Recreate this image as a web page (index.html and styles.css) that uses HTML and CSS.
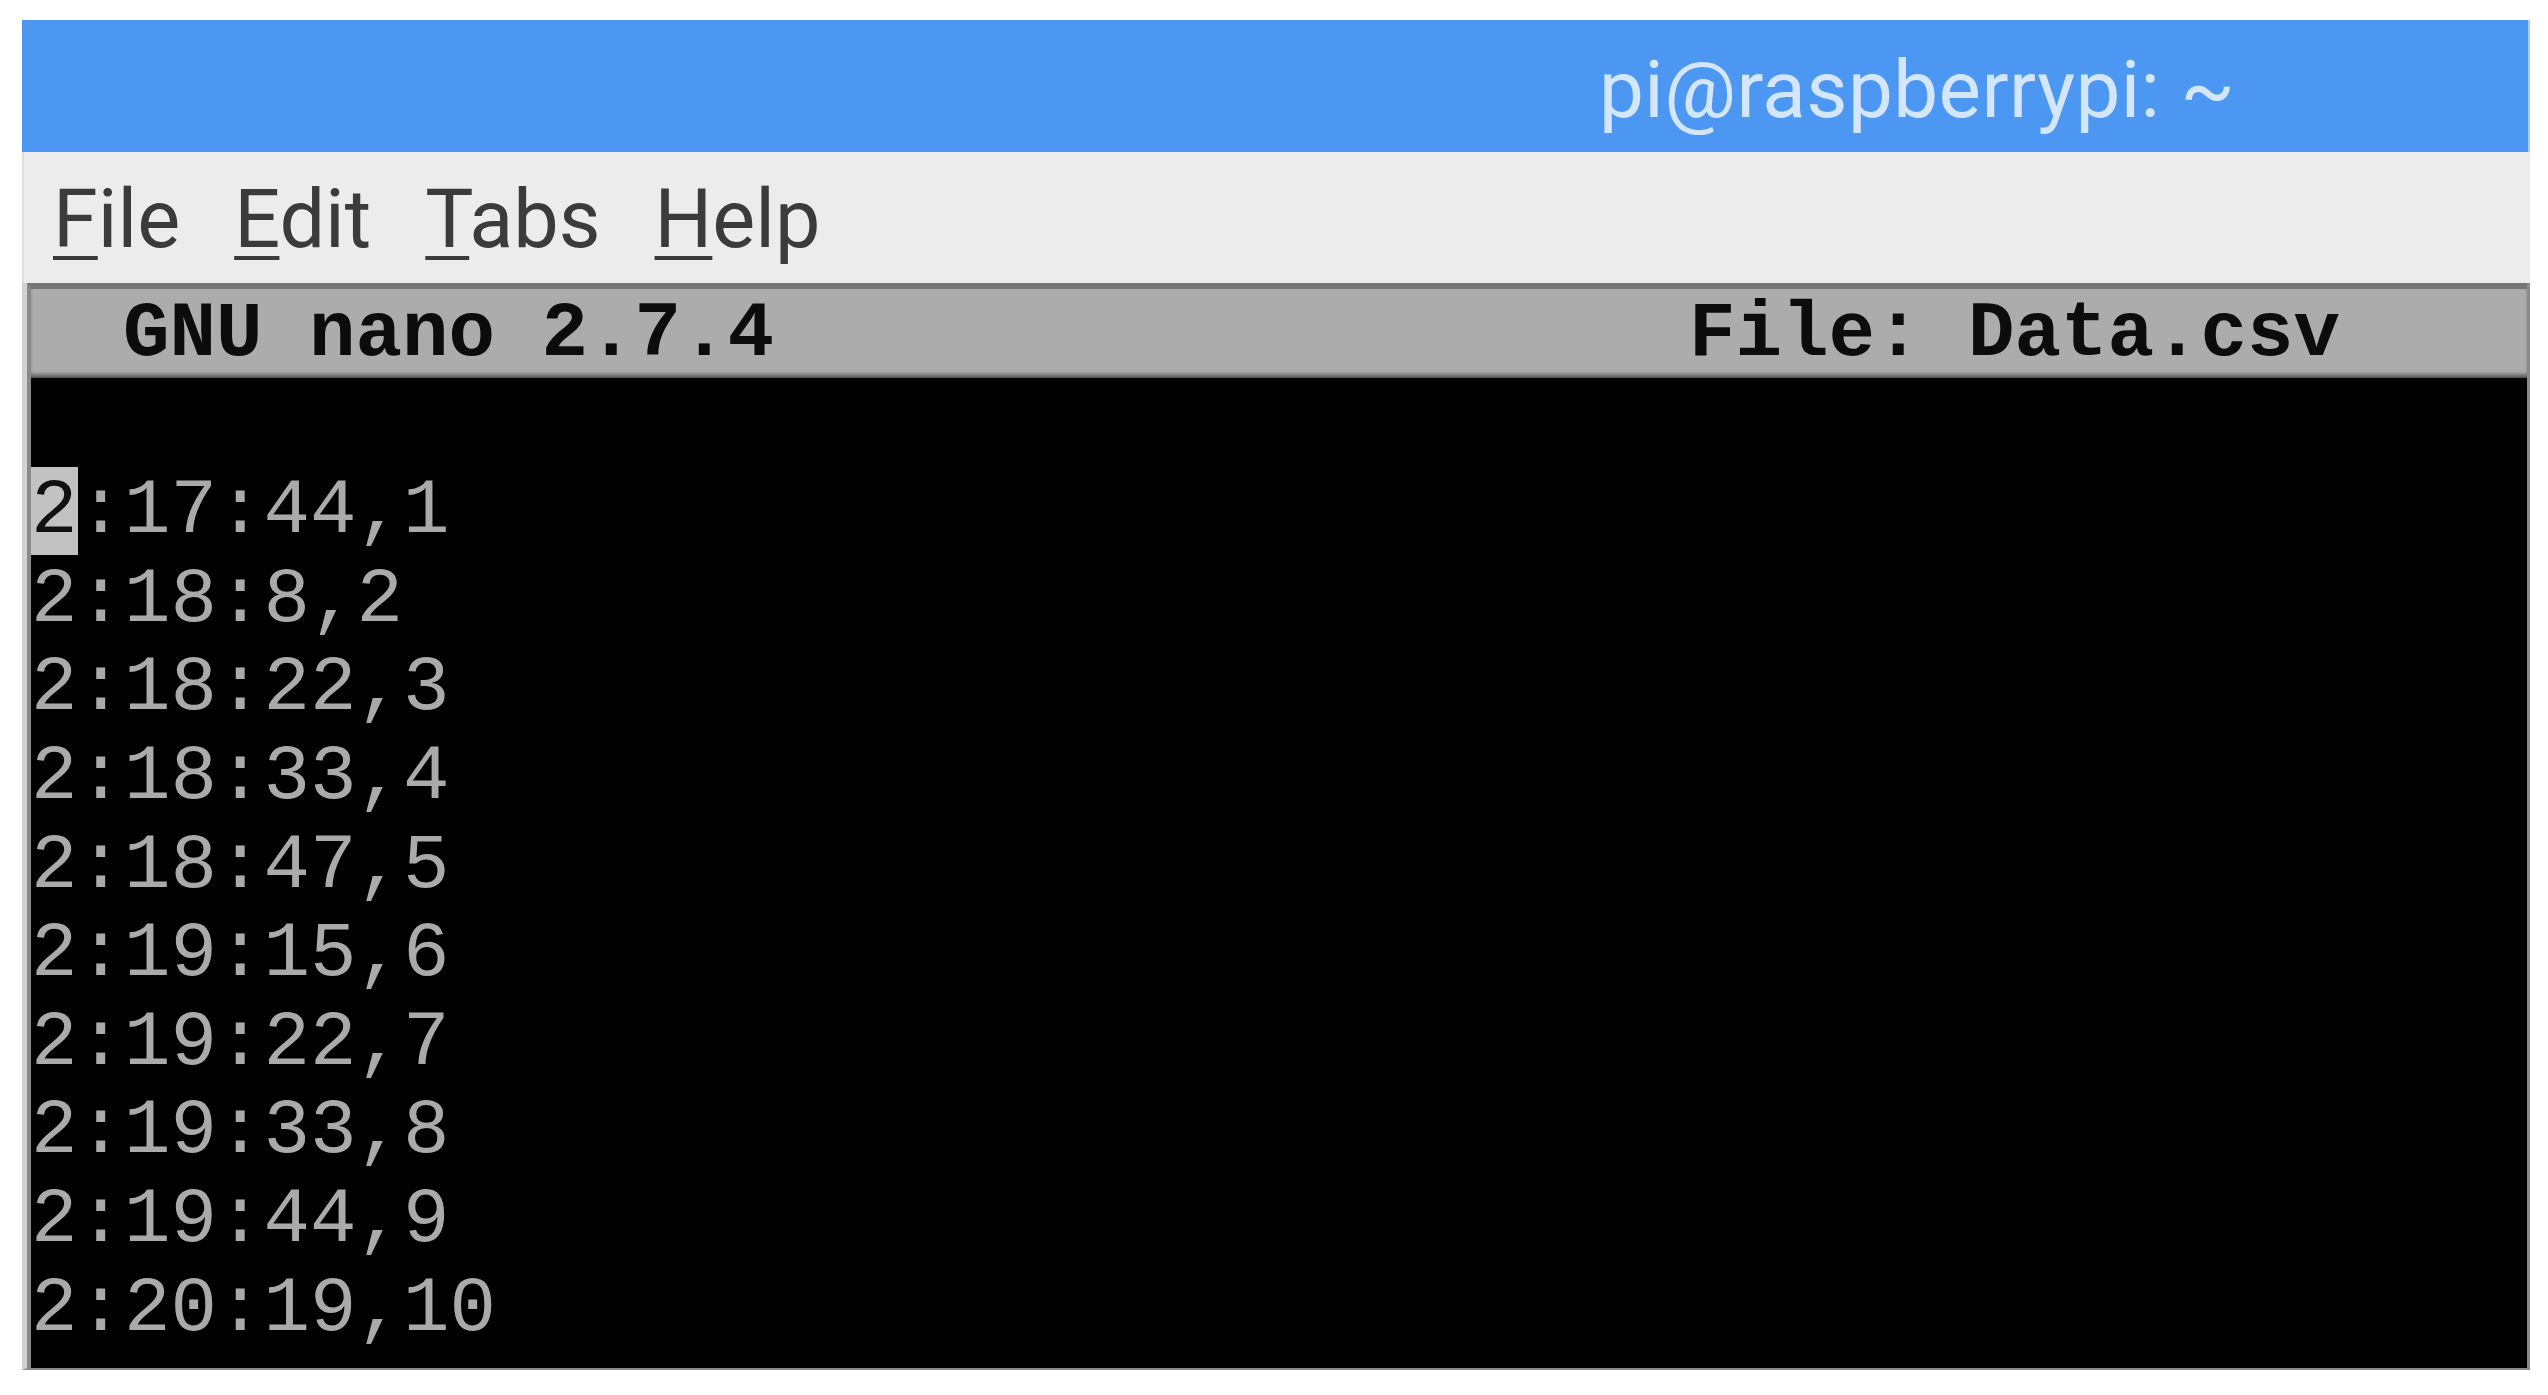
FILE: index.html
```html
<!DOCTYPE html>
<html lang="en">
<head>
<meta charset="utf-8">
<title>pi@raspberrypi: ~</title>
<link rel="stylesheet" href="styles.css">
</head>
<body>
<div class="window">
  <div class="titlebar"><span class="title">pi@raspberrypi: ~</span></div>
  <div class="menubar">
    <span class="menu-item"><u>F</u>ile</span>
    <span class="menu-item"><u>E</u>dit</span>
    <span class="menu-item"><u>T</u>abs</span>
    <span class="menu-item"><u>H</u>elp</span>
  </div>
  <div class="term">
    <div class="screen">
      <div class="row hdr"><span class="hdr-version">GNU nano 2.7.4</span><span class="hdr-file">File: Data.csv</span></div>
      <div class="row">&nbsp;</div>
      <div class="row"><span class="cursor">2</span>:17:44,1</div>
      <div class="row">2:18:8,2</div>
      <div class="row">2:18:22,3</div>
      <div class="row">2:18:33,4</div>
      <div class="row">2:18:47,5</div>
      <div class="row">2:19:15,6</div>
      <div class="row">2:19:22,7</div>
      <div class="row">2:19:33,8</div>
      <div class="row">2:19:44,9</div>
      <div class="row">2:20:19,10</div>
    </div>
  </div>
</div>
</body>
</html>
```
FILE: styles.css
```css
html, body {
  margin: 0;
  padding: 0;
  background: #ffffff;
}

body {
  padding: 20px 0 0 22px;
}

.window {
  width: 2508px;
  height: 1350px;
  display: flex;
  flex-direction: column;
}

.titlebar {
  box-sizing: border-box;
  height: 132px;
  padding-top: 8px;
  padding-left: 1577px;
  background: #4c97f1;
  border-right: 2px solid #a9cbf7;
  font-family: Roboto, "Liberation Sans", sans-serif;
  font-size: 80px;
  line-height: 124px;
  color: #d4e6fb;
  white-space: nowrap;
}

.title {
  letter-spacing: 0.4px;
}

.menubar {
  height: 131px;
  box-sizing: border-box;
  padding: 4px 0 0 29px;
  background: #ececec;
  border-left: 2px solid #dcdcdc;
  display: flex;
  gap: 54px;
  font-family: Roboto, "Liberation Sans", sans-serif;
  font-size: 81px;
  line-height: 127px;
  color: #3b3b3b;
  white-space: nowrap;
}

.menu-item u {
  text-decoration-thickness: 4px;
  text-underline-offset: 9px;
}

.term {
  flex: 1;
  display: flex;
  border-left: 5px solid #d2d2d2;
  border-right: 3px solid #8a8a8a;
  border-bottom: 2px solid #8a8a8a;
}

.screen {
  flex: 1;
  background: #000000;
  border-left: 4px solid #8a8a8a;
  border-top: 6px solid #767676;
  font-family: "Liberation Mono", "DejaVu Sans Mono", monospace;
  font-size: 77.5px;
  color: #aaaaaa;
}

.row {
  box-sizing: border-box;
  height: 88.6px;
  padding-top: 3px;
  line-height: 85.6px;
  white-space: pre;
}

.hdr {
  display: flex;
  padding-left: 92px;
  padding-right: 187px;
  background: #acacac;
  color: #0c0c0c;
  font-weight: bold;
  box-shadow: inset 0 -5px 4px -2px rgba(0, 0, 0, 0.55);
}

.hdr-file {
  margin-left: auto;
}

.cursor {
  background: #c2c2c2;
  color: #111111;
}
```
